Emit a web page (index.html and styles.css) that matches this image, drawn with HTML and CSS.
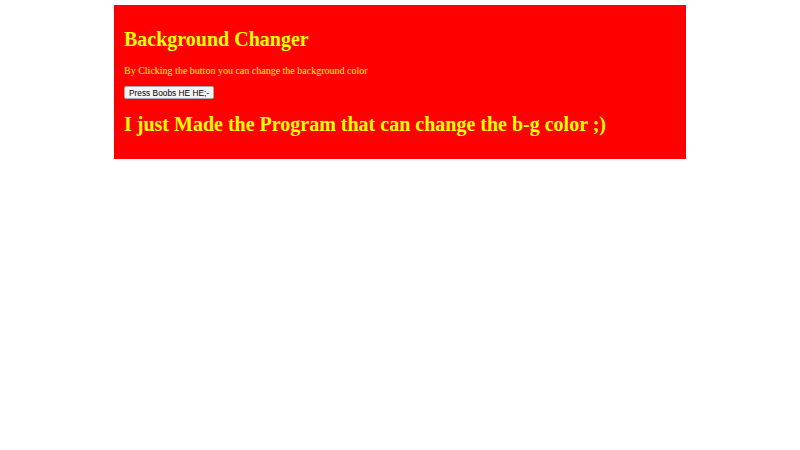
FILE: index.html
```html
<!DOCTYPE html>
<html>
<head>
<meta charset="utf-8">
<title>Background Changer</title>
<link rel="stylesheet" href="styles.css">
</head>
<body>
<div class="box">
  <h1 class="title">Background Changer</h1>
  <p class="desc">By Clicking the button you can change the background color</p>
  <button class="btn">Press Boobs HE HE;-</button>
  <h1 class="title">I just Made the Program that can change the b-g color ;)</h1>
</div>
</body>
</html>
```
FILE: styles.css
```css
html, body {
  margin: 0;
  padding: 0;
  background: #ffffff;
}
body {
  padding-top: 5px;
  font-family: "Liberation Serif", "Times New Roman", serif;
}
.box {
  width: 572px;
  margin: 0 auto;
  box-sizing: border-box;
  padding: 10px;
  background: #ff0000;
  color: #ffff00;
}
.title {
  font-size: 20px;
  font-weight: bold;
  margin: 13.4px 0;
  line-height: 23px;
}
.desc {
  font-size: 10px;
  margin: 10px 0;
  line-height: 11.5px;
}
.btn {
  display: block;
  font-family: "Liberation Sans", Arial, sans-serif;
  font-size: 8.33px;
  line-height: 10.5px;
  color: #000;
  background: #f3f3f3;
  border: 1px solid #a8a8a8;
  border-radius: 2px;
  padding: 0.3px 4px;
  margin: 0;
}
```
